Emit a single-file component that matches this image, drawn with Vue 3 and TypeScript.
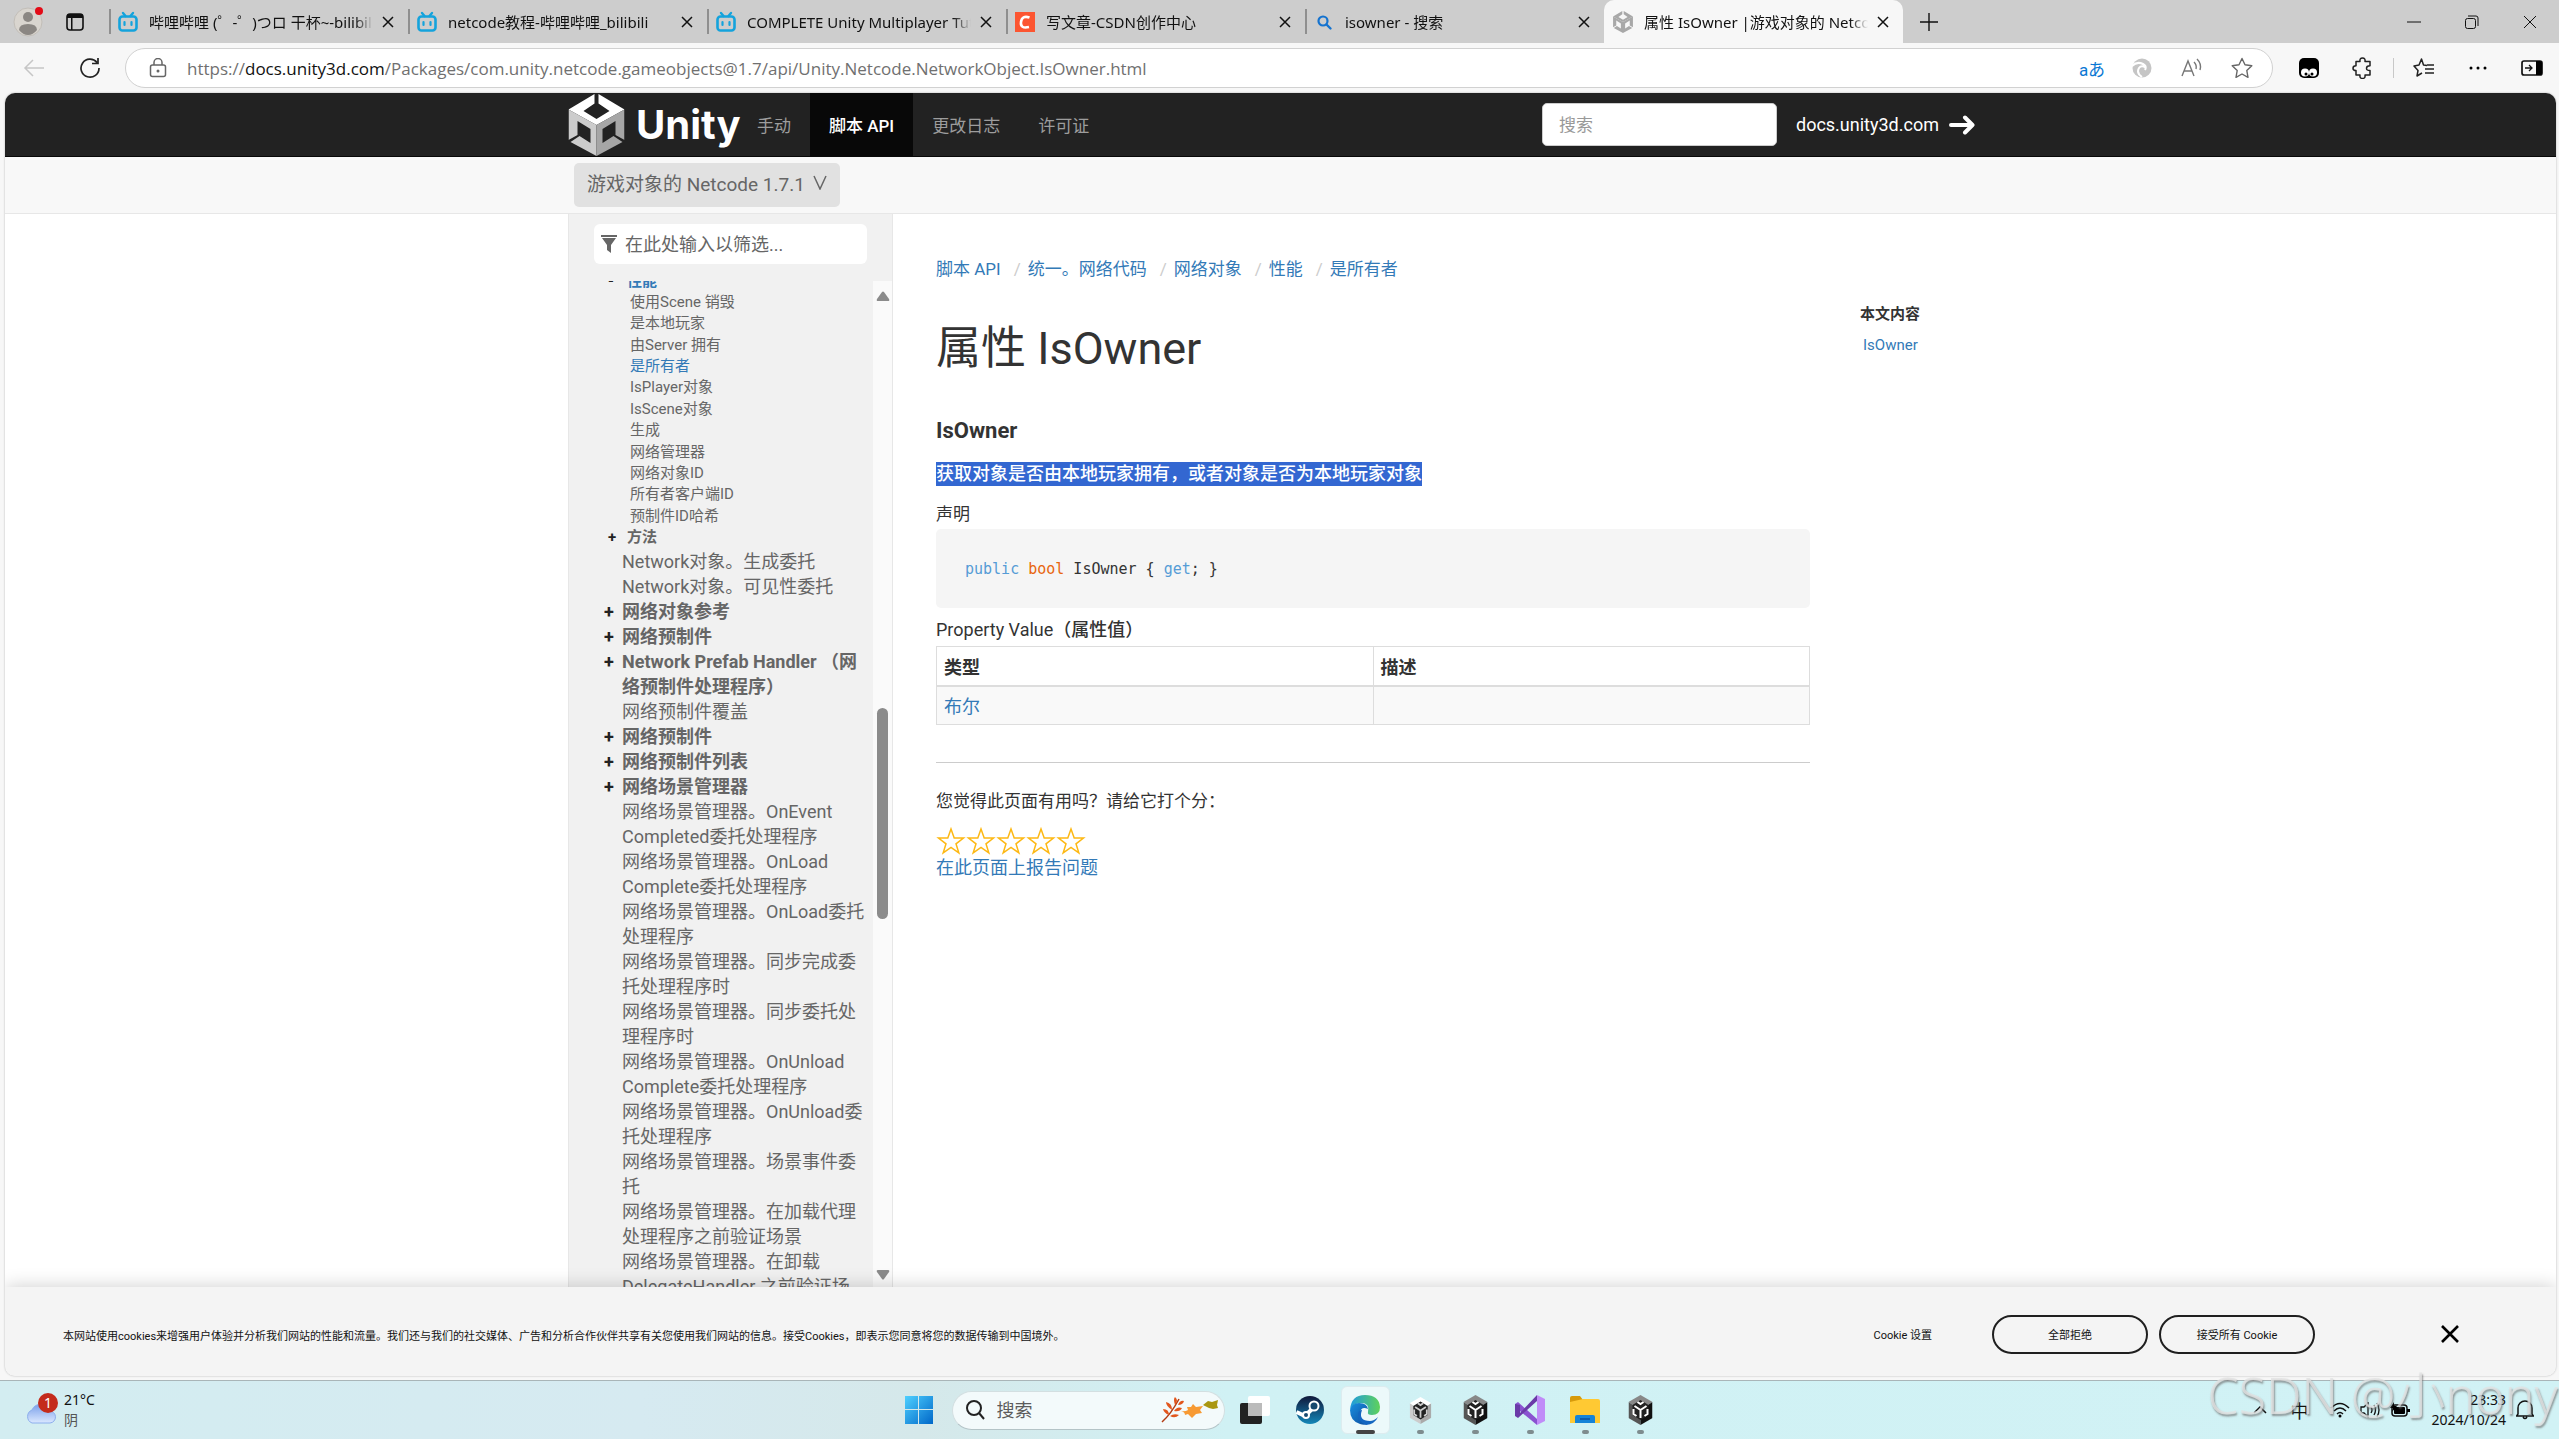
<script setup lang="ts">
interface Tab {
  title: string
  icon: 'bili' | 'csdn' | 'search' | 'unity'
  active?: boolean
}

interface TreeItem {
  text: string
  bold?: boolean
}

const tabs: Tab[] = [
  { title: '哔哩哔哩 (゜-゜)つロ 干杯~-bilibili', icon: 'bili' },
  { title: 'netcode教程-哔哩哔哩_bilibili', icon: 'bili' },
  { title: 'COMPLETE Unity Multiplayer Tutorial', icon: 'bili' },
  { title: '写文章-CSDN创作中心', icon: 'csdn' },
  { title: 'isowner - 搜索', icon: 'search' },
  { title: '属性 IsOwner |游戏对象的 Netcode', icon: 'unity', active: true },
]

const navItems = ['手动', '脚本 API', '更改日志', '许可证']
const crumbs = ['脚本 API', '统一。网络代码', '网络对象', '性能', '是所有者']

const properties = [
  '使用Scene 销毁',
  '是本地玩家',
  '由Server 拥有',
  '是所有者',
  'IsPlayer对象',
  'IsScene对象',
  '生成',
  '网络管理器',
  '网络对象ID',
  '所有者客户端ID',
  '预制件ID哈希',
]

const tree: TreeItem[] = [
  { text: 'Network对象。生成委托' },
  { text: 'Network对象。可见性委托' },
  { text: '网络对象参考', bold: true },
  { text: '网络预制件', bold: true },
  { text: 'Network Prefab Handler （网络预制件处理程序）', bold: true },
  { text: '网络预制件覆盖' },
  { text: '网络预制件', bold: true },
  { text: '网络预制件列表', bold: true },
  { text: '网络场景管理器', bold: true },
  { text: '网络场景管理器。OnEvent Completed委托处理程序' },
  { text: '网络场景管理器。OnLoad Complete委托处理程序' },
  { text: '网络场景管理器。OnLoad委托处理程序' },
  { text: '网络场景管理器。同步完成委托处理程序时' },
  { text: '网络场景管理器。同步委托处理程序时' },
  { text: '网络场景管理器。OnUnload Complete委托处理程序' },
  { text: '网络场景管理器。OnUnload委托处理程序' },
  { text: '网络场景管理器。场景事件委托' },
  { text: '网络场景管理器。在加载代理处理程序之前验证场景' },
  { text: '网络场景管理器。在卸载 DelegateHandler 之前验证场\n景' },
]
</script>

<template>
  <div class="screen">
    <svg class="defs" aria-hidden="true">
      <symbol id="cube" viewBox="0 0 56 62">
        <path fill="var(--top)" d="M26 0 0 15.500 28 31 56 15.500 30 0V9.500L41 17 28 25 15 17 26 9.500Z" />
        <path fill="var(--left)" d="M0 15.500 28 31V62L2 48 11 42 22 49V35L9 27V41L0 46Z" />
        <path fill="var(--right)" d="M56 15.500 28 31V62L54 48 45 42 34 49V35L47 27V41L56 46Z" />
      </symbol>
      <symbol id="hub" viewBox="0 0 24 30">
        <path fill="var(--a)" d="M12 0 24 7 12 15 0 7Z" />
        <path fill="var(--b)" d="M0 7 12 15V30L0 23Z" />
        <path fill="var(--c)" d="M24 7 12 15V30L24 23Z" />
        <path fill="var(--d)" d="M12 5 20 10V20L12 25 4 20V10Z" />
        <path fill="none" stroke="var(--e)" stroke-width="2" d="M12 15V23M12 15 6 11M12 15 18 11M9 7 12 9 15 7M5 14V19L8 21M19 14V19L16 21" />
      </symbol>
    </svg>

    <header class="tabbar">
      <div class="tab-tools">
        <button class="avatar" aria-label="个人资料">
          <svg width="32" height="30" viewBox="0 0 32 30">
            <circle cx="15" cy="15" r="14" fill="#d9d5cf" stroke="#c2beb8" />
            <circle cx="15" cy="10" r="5" fill="#8b8783" />
            <path d="M6 23q0-6 9-6t9 6q-4 5-9 5t-9-5" fill="#8b8783" />
            <circle cx="26" cy="4" r="4" fill="#e30b17" />
          </svg>
        </button>
        <button aria-label="标签操作">
          <svg width="20" height="20" viewBox="0 0 20 20">
            <rect x="2" y="2" width="16" height="16" rx="3" fill="none" stroke="#111" stroke-width="1.600" />
            <path d="M2 6V4q0-2 2-2h12q2 0 2 2v2ZM6 6h1.500v12H6Z" fill="#111" />
          </svg>
        </button>
      </div>
      <div v-for="tab in tabs" :key="tab.title" class="tab" :class="{ active: tab.active }">
        <svg v-if="tab.icon === 'bili'" class="favicon" viewBox="0 0 22 22">
          <path d="M6 2 8.500 5M16 2 13.500 5" stroke="#14a3dc" stroke-width="2.400" stroke-linecap="round" />
          <rect x="2.500" y="5.500" width="17" height="14" rx="3" fill="none" stroke="#14a3dc" stroke-width="2.600" />
          <path d="M7.500 11v3M14.500 11v3" stroke="#14a3dc" stroke-width="2.200" stroke-linecap="round" />
        </svg>
        <svg v-else-if="tab.icon === 'csdn'" class="favicon" viewBox="0 0 22 22">
          <rect x="1" y="1" width="20" height="20" fill="#fc5531" />
          <path d="M15.500 6.500Q8 4 7 11t8 5" fill="none" stroke="#fff" stroke-width="2.600" />
        </svg>
        <svg v-else-if="tab.icon === 'search'" class="favicon" viewBox="0 0 22 22">
          <circle cx="10" cy="10" r="4.500" fill="none" stroke="#1573cf" stroke-width="2.200" />
          <path d="m13.500 13.500 4 4" stroke="#1573cf" stroke-width="2.400" stroke-linecap="round" />
        </svg>
        <svg v-else class="favicon gray" viewBox="0 0 56 62"><use href="#cube" /></svg>
        <span class="tab-title">{{ tab.title }}</span>
        <button class="tab-close" aria-label="关闭标签页">
          <svg width="12" height="12" viewBox="0 0 12 12"><path d="m1 1 10 10M11 1 1 11" stroke="#111" stroke-width="1.500" /></svg>
        </button>
      </div>
      <button class="new-tab" aria-label="新建标签页">
        <svg width="18" height="18" viewBox="0 0 18 18"><path d="M9 0v18M0 9h18" stroke="#111" stroke-width="1.400" /></svg>
      </button>
      <div class="window-controls">
        <button aria-label="最小化"><svg width="14" height="14" viewBox="0 0 14 14"><path d="M0 7h14" stroke="#111" /></svg></button>
        <button aria-label="还原">
          <svg width="14" height="14" viewBox="0 0 14 14"><path d="M3 1h8q2 0 2 2v8" fill="none" stroke="#111" /><rect x=".5" y="3.500" width="10" height="10" rx="2" fill="none" stroke="#111" /></svg>
        </button>
        <button aria-label="关闭"><svg width="14" height="14" viewBox="0 0 14 14"><path d="m1 1 12 12M13 1 1 13" stroke="#111" /></svg></button>
      </div>
    </header>

    <div class="toolbar">
      <button class="tool" aria-label="返回">
        <svg width="22" height="20" viewBox="0 0 22 20"><path d="M21 10H2M10 2 2 10l8 8" fill="none" stroke="#c6c6c6" stroke-width="1.500" /></svg>
      </button>
      <button class="tool" aria-label="刷新">
        <svg width="22" height="22" viewBox="0 0 22 22"><path d="M18 5.500A9 9 0 1 0 20 11M19 1v5.500h-6" fill="none" stroke="#222" stroke-width="1.700" /></svg>
      </button>
      <div class="address">
        <svg width="18" height="20" viewBox="0 0 18 20"><rect x="1.500" y="7" width="15" height="11.500" rx="2" fill="none" stroke="#666" stroke-width="1.500" /><path d="M5 7V4.500a4 4 0 0 1 8 0V7" fill="none" stroke="#666" stroke-width="1.500" /><circle cx="9" cy="13" r="1.500" fill="#666" /></svg>
        <span class="url">https://<b>docs.unity3d.com</b>/Packages/com.unity.netcode.gameobjects@1.7/api/Unity.Netcode.NetworkObject.IsOwner.html</span>
        <button class="translate" aria-label="翻译">aあ</button>
        <button aria-label="购物">
          <svg width="20" height="20" viewBox="0 0 20 20"><circle cx="10" cy="10" r="9.500" fill="#c5c5c5" /><path d="M0 8q5-5 11-2 4 2 2 6M10 19q-6-4-3-9 2-3 6-1" fill="none" stroke="#fff" stroke-width="2" /></svg>
        </button>
        <button aria-label="大声朗读">
          <svg width="22" height="20" viewBox="0 0 22 20"><path d="M1 18 7 3l6 15M3 13h8M13 4q3 3 2 7M16 1q5 5 3 11" fill="none" stroke="#777" stroke-width="1.400" /></svg>
        </button>
        <button aria-label="收藏">
          <svg width="22" height="22" viewBox="0 0 22 22"><path d="m11 1.500 3 6.300 6.800.9-5 4.800 1.200 6.800-6-3.300-6 3.300 1.200-6.800-5-4.800 6.800-.9Z" fill="none" stroke="#666" stroke-width="1.400" stroke-linejoin="round" /></svg>
        </button>
      </div>
      <div class="extensions">
        <button aria-label="篡改猴">
          <svg width="20" height="20" viewBox="0 0 20 20"><rect width="20" height="20" rx="5" fill="#000" /><circle cx="6" cy="14.500" r="4" fill="#fff" /><circle cx="14" cy="14.500" r="4" fill="#fff" /><circle cx="7" cy="16" r="1.500" /><circle cx="13" cy="16" r="1.500" /></svg>
        </button>
        <button aria-label="扩展">
          <svg width="22" height="22" viewBox="0 0 22 22"><path d="M4 4.500h4q-.5-3.500 2.500-3.500T13 4.500h5v4.300q-3.500 0-3.500 2.400t3.500 2.400v4.400h-5q.5 3.500-2.500 3.500T8 18H4v-4.400q-3 0-3-2.400t3-2.400Z" fill="none" stroke="#222" stroke-width="1.500" stroke-linejoin="round" /></svg>
        </button>
        <span class="divider"></span>
        <button aria-label="收藏夹">
          <svg width="22" height="22" viewBox="0 0 22 22"><path d="M14 8.500 10.500 8 8.500 2l-2.500 6-5 1 4 4.500L4 19l5-3M14 8h7M12 12h9M12 16h9" fill="none" stroke="#222" stroke-width="1.500" stroke-linejoin="round" /></svg>
        </button>
        <button aria-label="更多">
          <svg width="20" height="6" viewBox="0 0 20 6"><circle cx="3" cy="3" r="1.500" /><circle cx="10" cy="3" r="1.500" /><circle cx="17" cy="3" r="1.500" /></svg>
        </button>
        <button aria-label="侧边栏">
          <svg width="22" height="18" viewBox="0 0 22 18"><rect x="1" y="2" width="20" height="14" rx="2" fill="none" stroke="#111" stroke-width="1.700" /><path d="M4 9h7M8 6l3 3-3 3" stroke="#111" stroke-width="1.300" fill="none" /><path d="M15 2h4q2 0 2 2v10q0 2-2 2h-4Z" /></svg>
        </button>
      </div>
    </div>

    <div class="page">
      <nav class="navbar">
        <div class="container nav-row">
          <a href="#" class="brand">
            <svg width="57" height="62" viewBox="0 0 56 62"><use href="#cube" /></svg>
            <span>Unity</span>
          </a>
          <a v-for="(item, i) in navItems" :key="item" href="#" class="nav-link" :class="{ current: i === 1 }">{{ item }}</a>
          <input class="site-search" type="text" placeholder="搜索" aria-label="搜索" />
          <a href="#" class="docs-link">
            docs.unity3d.com
            <svg width="27" height="20" viewBox="0 0 27 20"><path d="M2 10h20M16 2.500 23.500 10 16 17.500" fill="none" stroke="#fff" stroke-width="4" stroke-linecap="round" stroke-linejoin="round" /></svg>
          </a>
        </div>
      </nav>
      <div class="subnav">
        <div class="container">
          <button class="version">
            游戏对象的 Netcode 1.7.1
            <svg width="14" height="15" viewBox="0 0 14 15"><path d="M1 1 7 14 13 1" fill="none" stroke="#666" stroke-width="1.500" /></svg>
          </button>
        </div>
      </div>

      <div class="container body">
        <aside class="sidebar">
          <div class="filter">
            <svg width="16" height="18" viewBox="0 0 16 18"><path d="M0 0h16v2H0ZM1 3h14L10 10v8l-4-3v-5Z" fill="#666" /></svg>
            <input type="text" placeholder="在此处输入以筛选..." aria-label="筛选" />
          </div>
          <div class="tree-wrap">
            <div class="tree">
              <div class="group open"><span class="sign">-</span><a href="#">性能</a></div>
              <ul class="props">
                <li v-for="(p, i) in properties" :key="p"><a href="#" :class="{ selected: i === 3 }">{{ p }}</a></li>
              </ul>
              <div class="group"><span class="sign">+</span><a href="#">方法</a></div>
              <ul class="types">
                <li v-for="(item, i) in tree" :key="i" :class="{ bold: item.bold }">
                  <span class="sign">{{ item.bold ? '+' : '' }}</span><a href="#">{{ item.text }}</a>
                </li>
              </ul>
            </div>
            <div class="scrollbar">
              <svg width="14" height="10" viewBox="0 0 14 10"><path d="M6 1q1-1 2 0l5 7q1 2-1 2H2Q0 10 1 8Z" fill="#8b8b8b" /></svg>
              <div class="track"><div class="thumb"></div></div>
              <svg width="14" height="10" viewBox="0 0 14 10"><path d="M6 9q1 1 2 0l5-7q1-2-1-2H2Q0 0 1 2Z" fill="#8b8b8b" /></svg>
            </div>
          </div>
        </aside>

        <main class="article">
          <nav class="crumbs">
            <template v-for="(c, i) in crumbs" :key="c">
              <span v-if="i" class="slash">/</span><a href="#">{{ c }}</a>
            </template>
          </nav>
          <h1>属性 IsOwner</h1>
          <h4>IsOwner</h4>
          <p class="summary"><mark>获取对象是否由本地玩家拥有，或者对象是否为本地玩家对象</mark></p>
          <h5>声明</h5>
          <pre><code><span class="kw">public</span> <span class="ty">bool</span> IsOwner { <span class="kw">get</span>; }</code></pre>
          <h5 class="value-title">Property Value<b>（属性值）</b></h5>
          <table>
            <thead>
              <tr><th>类型</th><th>描述</th></tr>
            </thead>
            <tbody>
              <tr><td><a href="#">布尔</a></td><td></td></tr>
            </tbody>
          </table>
          <hr />
          <p class="question">您觉得此页面有用吗？请给它打个分：</p>
          <div class="stars">
            <button v-for="n in 5" :key="n" :aria-label="n + ' 星'">
              <svg width="30" height="28" viewBox="0 0 30 28"><path d="m15 2 3.200 9H27.500l-7.500 5.800 2.800 9L15 20.400 7.200 25.800l2.800-9L2.500 11h9.300Z" fill="none" stroke="#fdb813" stroke-width="1.500" /></svg>
            </button>
          </div>
          <a href="#" class="report">在此页面上报告问题</a>
        </main>

        <aside class="toc">
          <h6>本文内容</h6>
          <a href="#">IsOwner</a>
        </aside>
      </div>

      <section class="cookies">
        <p>本网站使用cookies来增强用户体验并分析我们网站的性能和流量。我们还与我们的社交媒体、广告和分析合作伙伴共享有关您使用我们网站的信息。接受Cookies，即表示您同意将您的数据传输到中国境外。</p>
        <button class="settings">Cookie 设置</button>
        <button class="pill">全部拒绝</button>
        <button class="pill">接受所有 Cookie</button>
        <button class="dismiss" aria-label="关闭">
          <svg width="18" height="18" viewBox="0 0 18 18"><path d="m1 1 16 16M17 1 1 17" stroke="#000" stroke-width="2.600" /></svg>
        </button>
      </section>
    </div>

    <footer class="taskbar">
      <div class="weather">
        <svg width="36" height="36" viewBox="0 0 36 36">
          <defs><linearGradient id="cloud" x1="0" y1="0" x2="0" y2="1"><stop offset="0" stop-color="#7ba0ea" /><stop offset="1" stop-color="#dbe8ff" /></linearGradient></defs>
          <path d="M8 31a7 7 0 0 1 0-13A9 9 0 0 1 25 19a6 6 0 0 1 1 12Z" fill="url(#cloud)" stroke="#8caeed" />
          <circle cx="24" cy="11" r="10" fill="#c42b1c" />
          <text x="24" y="16" fill="#fff" font-size="14" text-anchor="middle">1</text>
        </svg>
        <div><div>21°C</div><div class="sky">阴</div></div>
      </div>
      <div class="apps">
        <button class="app" aria-label="开始">
          <svg width="30" height="30" viewBox="0 0 30 30">
            <defs><linearGradient id="win" x1="0" y1="0" x2="1" y2="1"><stop offset="0" stop-color="#4fd0ff" /><stop offset="1" stop-color="#0067c8" /></linearGradient></defs>
            <path d="M1 1h13v13H1ZM15 1h14v13H15ZM1 15h13v14H1ZM15 15h14v14H15Z" fill="url(#win)" />
          </svg>
        </button>
        <label class="task-search">
          <svg width="20" height="20" viewBox="0 0 20 20"><circle cx="9" cy="8" r="7" fill="none" stroke="#222" stroke-width="2" /><path d="m14 13 5 6" stroke="#222" stroke-width="2" /></svg>
          <input type="text" placeholder="搜索" aria-label="搜索" />
          <svg width="58" height="28" viewBox="0 0 58 28">
            <path d="M1 26Q10 18 18 3" fill="none" stroke="#b33b12" stroke-width="1.500" />
            <path d="M14 9q-2-6 0-8 4 3 0 8M17 9q2-5 6-4-1 4-6 4M11 14q-6-4-6-8 6 1 6 8M13 15q3-5 8-3-2 4-8 3M8 19q-5-2-6-6 6 0 6 6M9 20q4-3 9-1-4 4-9 1" fill="#e2561d" />
            <path d="M20 15q4 1 7-1l-1-3 4 0 2-3 3 3 7-1-3 4 2 3-6 1-4 4-4-4-3 1q0-3-4-4" fill="#f79a33" />
            <path d="m42 9 5-4 4 1 6-2-1 5 1 3-5 1-4-1Z" fill="#a99711" />
          </svg>
        </label>
        <button class="app" aria-label="任务视图">
          <svg width="30" height="30" viewBox="0 0 30 30"><rect y="8" width="22" height="21" rx="2" fill="#222" /><rect x="8" y="1" width="22" height="20" rx="2" fill="#fff" /><path d="M8 8h14v13H8Z" fill="#bbb" /></svg>
        </button>
        <button class="app" aria-label="Steam">
          <svg width="30" height="30" viewBox="0 0 30 30">
            <defs><linearGradient id="steam" x1="0" y1="0" x2="0" y2="1"><stop offset="0" stop-color="#11183a" /><stop offset="1" stop-color="#1387b8" /></linearGradient></defs>
            <circle cx="15" cy="15" r="14" fill="url(#steam)" /><path d="m1.500 17 8.500 4 8-8" fill="none" stroke="#fff" stroke-width="4" /><circle cx="19" cy="11" r="4.500" fill="#17496f" stroke="#fff" stroke-width="2" /><circle cx="11" cy="20" r="3" fill="#17496f" stroke="#fff" stroke-width="2" />
          </svg>
        </button>
        <button class="app focused" aria-label="Edge">
          <svg width="30" height="30" viewBox="0 0 30 30">
            <defs>
              <linearGradient id="edge" x1="0" y1="0" x2="1" y2="0"><stop offset="0" stop-color="#1f9be0" /><stop offset="1" stop-color="#5fd25a" /></linearGradient>
              <linearGradient id="deep" x1="0" y1="0" x2="1" y2="1"><stop offset="0" stop-color="#1a8fe0" /><stop offset="1" stop-color="#0c4a9b" /></linearGradient>
            </defs>
            <path d="M0 15Q1 0 15 0t15 12q0 8-8 8-5 0-4-3 2-9-7-9Q3 8 0 15" fill="url(#edge)" />
            <path d="M0 15q2-7 9-7 8 0 9 6-7-3-8 4 0 9 10 10-5 3-10 1Q0 26 0 15" fill="url(#deep)" />
            <path d="M12 15q-4 11 8 11 4 0 8-4-3 7-12 8-9-4-8-11 1-4 4-4" fill="#1466c0" />
          </svg>
        </button>
        <button class="app running light" aria-label="Unity Hub"><svg width="25" height="27" viewBox="0 0 24 30"><use href="#hub" /></svg></button>
        <button class="app running dark" aria-label="Unity"><svg width="27" height="30" viewBox="0 0 24 30"><use href="#hub" /></svg></button>
        <button class="app running" aria-label="Visual Studio">
          <svg width="30" height="30" viewBox="0 0 30 30"><path d="M0 9 3 7 22 24V30L0 12Z" fill="#8a52d0" /><path d="M0 9v12l3 2 19-17V0L5 18V10Z" fill="#6a3aa8" /><path d="m22 0 8 4v22l-8 4Z" fill="#c08cf8" /></svg>
        </button>
        <button class="app running" aria-label="文件资源管理器">
          <svg width="30" height="28" viewBox="0 0 30 28"><path d="M0 2q0-2 2-2h8l3 4v4H0Z" fill="#d79a0b" /><path d="M0 6 13 3h15q2 0 2 2v22H0Z" fill="#ffc933" /><path d="M5 27v-6q0-2 2-2h16q2 0 2 2v6Z" fill="#1583d8" /><path d="M10 23h10" stroke="#0a4f9e" stroke-width="1.500" /></svg>
        </button>
        <button class="app running dark" aria-label="Unity 编辑器"><svg width="27" height="30" viewBox="0 0 24 30"><use href="#hub" /></svg></button>
      </div>
      <div class="tray">
        <svg width="14" height="8" viewBox="0 0 14 8"><path d="m1 7 6-6 6 6" fill="none" stroke="#111" stroke-width="1.500" /></svg>
        <span class="ime">中</span>
        <svg width="20" height="16" viewBox="0 0 20 16"><path d="M1 6q9-9 18 0M4 9q6-6 12 0M7 12q3-3 6 0" fill="none" stroke="#111" stroke-width="1.500" /><circle cx="10" cy="14" r="1.500" /></svg>
        <svg width="20" height="16" viewBox="0 0 20 16"><path d="M1 5h3l4-4v14l-4-4H1ZM11 5q2 3 0 6M14 3q3 5 0 10M17 1q4 7 0 14" fill="none" stroke="#111" stroke-width="1.300" /></svg>
        <svg width="20" height="16" viewBox="0 0 20 16"><rect x="2" y="3" width="15" height="11" rx="3" fill="none" stroke="#111" stroke-width="1.500" /><rect x="4" y="5" width="11" height="7" rx="1" /><path d="M17 7h3v3h-3ZM4 0 0 6h3L2 10 7 4H4Z" /></svg>
        <div class="clock"><div>23:33</div><div>2024/10/24</div></div>
        <svg width="18" height="20" viewBox="0 0 18 20"><path d="M2 14V8a7 7 0 0 1 14 0v6l1.500 2H.5ZM7 17q2 3 4 0" fill="none" stroke="#111" stroke-width="1.500" /></svg>
      </div>
    </footer>
    <div class="watermark">CSDN @小nony</div>
  </div>
</template>

<style>
body {
  margin: 0;
}
</style>

<style scoped>
* {
  box-sizing: border-box;
}
.screen {
  position: relative;
  display: flex;
  flex-direction: column;
  height: 100vh;
  overflow: hidden;
  background: #f7f7f7;
  color: #333;
  font-family: Roboto, "Noto Sans CJK SC", sans-serif;
  font-size: 18px;
}
.defs {
  position: absolute;
  width: 0;
  height: 0;
}
button {
  display: flex;
  align-items: center;
  justify-content: center;
  padding: 0;
  border: 0;
  background: none;
  color: inherit;
  font: inherit;
}
input {
  min-width: 0;
  padding: 0;
  border: 0;
  outline: 0;
  background: none;
  font: inherit;
}
a {
  color: #337ab7;
  text-decoration: none;
}
ul {
  margin: 0;
  padding: 0;
  list-style: none;
}
svg {
  flex: none;
}

/* Browser tabs */
.tabbar {
  display: flex;
  flex: none;
  align-items: center;
  height: 43px;
  background: #cdcdcd;
  color: #111;
  font-family: "Noto Sans", "Noto Sans CJK SC", sans-serif;
  font-size: 15px;
}
.tab-tools {
  display: flex;
  flex: none;
  align-items: center;
  gap: 20px;
  width: 109px;
  padding-left: 13px;
}
.tab {
  display: flex;
  flex: 0 1 299px;
  align-items: center;
  min-width: 0;
  height: 25px;
  padding: 0 13px 0 6px;
  border-left: 2px solid #8f8f8f;
}
.tab.active {
  height: 43px;
  border-left-color: transparent;
  border-radius: 10px 10px 0 0;
  background: #f7f7f7;
}
.favicon {
  width: 22px;
  height: 22px;
}
.tab-title {
  flex: 1;
  margin-left: 10px;
  overflow: hidden;
  line-height: 22px;
  white-space: nowrap;
  mask-image: linear-gradient(to right, #000 92%, transparent);
}
.tab-close {
  width: 14px;
  margin-left: 8px;
}
.new-tab {
  width: 52px;
}
.window-controls {
  display: flex;
  margin-left: auto;
}
.window-controls button {
  width: 58px;
  height: 43px;
}

/* Toolbar */
.toolbar {
  display: flex;
  flex: none;
  align-items: center;
  height: 50px;
  padding-left: 6px;
}
.tool {
  width: 56px;
}
.address {
  display: flex;
  flex: 1;
  align-items: center;
  height: 40px;
  margin-left: 7px;
  padding: 0 5px 0 23px;
  border: 1px solid #d1d1d1;
  border-radius: 20px;
  background: #fff;
}
.url {
  flex: 1;
  margin-left: 20px;
  color: #707070;
  font-family: "Open Sans", sans-serif;
  font-size: 17px;
}
.url b {
  color: #111;
  font-weight: 400;
}
.address button {
  width: 50px;
}
.address .translate {
  color: #0a78d4;
  font-size: 17px;
}
.extensions {
  display: flex;
  align-items: center;
  padding-left: 9px;
}
.extensions button {
  width: 54px;
}
.divider {
  width: 1px;
  height: 20px;
  margin: 0 3px;
  background: #c8c8c8;
}

/* Web page frame */
.page {
  display: flex;
  flex: 1;
  flex-direction: column;
  min-height: 0;
  margin: 0 3px 4px 5px;
  overflow: hidden;
  border-radius: 10px;
  background: #fff;
  box-shadow: 0 0 2px #aaa;
}
.container {
  width: 100%;
  max-width: 1425px;
  margin: 0 auto;
}
.navbar {
  flex: none;
  border-bottom: 1px solid #080808;
  background: #222;
}
.nav-row {
  display: flex;
  align-items: center;
  height: 63px;
}
.brand {
  --top: #fff;
  --left: #ccc;
  --right: #a6a6a6;
  display: flex;
  align-items: center;
  gap: 11px;
  width: 170px;
  color: #fff;
  font-family: Inter, sans-serif;
  font-size: 40px;
  font-weight: 700;
}
.nav-link {
  display: flex;
  align-items: center;
  height: 63px;
  padding: 0 19px;
  color: #9d9d9d;
  font-size: 17px;
}
.nav-link.current {
  background: #080808;
  color: #fff;
  font-weight: 500;
}
.site-search {
  width: 235px;
  height: 43px;
  margin-left: auto;
  padding: 0 16px;
  border: 1px solid #ccc;
  border-radius: 5px;
  background: #fff;
  font-size: 17px;
}
.site-search::placeholder {
  color: #999;
}
.docs-link {
  display: flex;
  align-items: center;
  gap: 10px;
  margin: 0 17px 0 19px;
  color: #fff;
}
.subnav {
  flex: none;
  height: 57px;
  padding-top: 6px;
  border-bottom: 1px solid #e7e7e7;
  background: #f8f8f8;
}
.version {
  gap: 8px;
  height: 44px;
  margin-left: 6px;
  padding: 0 13px 6px;
  border-radius: 5px;
  background: #e1e1e1;
  color: #666;
  font-size: 19px;
}
.body {
  display: flex;
  flex: 1;
  min-height: 0;
}

/* Sidebar */
.sidebar {
  display: flex;
  flex: none;
  flex-direction: column;
  width: 325px;
  border: 1px solid #e7e7e7;
  border-width: 0 1px;
  background: #f1f1f1;
}
.filter {
  display: flex;
  flex: none;
  align-items: center;
  gap: 8px;
  height: 40px;
  margin: 10px 25px 17px;
  padding: 0 7px;
  border-radius: 6px;
  background: #fff;
}
.filter input {
  flex: 1;
}
.filter input::placeholder {
  color: #666;
}
.tree-wrap {
  display: flex;
  flex: 1;
  min-height: 0;
}
.tree {
  flex: 1;
  margin-left: 35px;
  overflow: hidden;
}
.sidebar a {
  color: #666;
}
.group {
  display: flex;
  gap: 12px;
  height: 21px;
  padding-left: 4px;
  font-size: 15px;
  font-weight: 700;
  line-height: 21px;
}
.group .sign {
  width: 7px;
}
.group.open {
  margin-top: -10px;
}
.sidebar .group.open a,
.sidebar .selected {
  color: #337ab7;
}
.props {
  display: grid;
  grid-template-rows: repeat(11, 1fr);
  height: 235px;
  padding-left: 26px;
  font-size: 15px;
  line-height: 21px;
}
.types {
  margin-top: 1px;
  line-height: 25px;
}
.types li {
  display: flex;
}
.types .sign {
  flex: none;
  width: 18px;
}
.types a {
  width: 248px;
  white-space: pre-line;
}
.bold {
  font-weight: 700;
}
.sign {
  color: #222;
}
.scrollbar {
  display: flex;
  flex: none;
  flex-direction: column;
  align-items: center;
  width: 19px;
  padding: 10px 0 7px;
  background: #fafafa;
}
.track {
  display: flex;
  flex: 1;
  flex-direction: column;
  padding-top: 407px;
}
.thumb {
  width: 11px;
  height: 211px;
  border-radius: 6px;
  background: #8b8b8b;
}

/* Article */
.article {
  flex: none;
  width: 874px;
  margin-left: 43px;
  padding-top: 42px;
}
.crumbs {
  display: flex;
  height: 26px;
  font-size: 17px;
  line-height: 26px;
}
.slash {
  margin: 0 7px 0 13px;
  color: #ccc;
}
h1 {
  margin: 42px 0 0;
  font-size: 45px;
  font-weight: 400;
  line-height: 50px;
}
h4 {
  margin: 42px 0 0;
  font-size: 22px;
  font-weight: 700;
  line-height: 30px;
}
.summary {
  margin: 16px 0 15px;
  line-height: 24px;
}
mark {
  display: inline-block;
  background: #3367d1;
  color: #fff;
  font-weight: 500;
}
h5 {
  margin: 0;
  font-size: 17px;
  font-weight: 400;
  line-height: 26px;
}
pre {
  margin: 2px 0 9px;
  padding: 30px 29px 28px;
  border-radius: 5px;
  background: #f5f5f5;
  font-family: "DejaVu Sans Mono", monospace;
  font-size: 15px;
  line-height: 21px;
}
code {
  font: inherit;
}
.kw {
  color: #569cd6;
}
.ty {
  color: #e8650d;
}
.value-title {
  font-size: 18px;
}
.value-title b {
  font-weight: 500;
}
table {
  width: 100%;
  margin-top: 3px;
  border-collapse: collapse;
  table-layout: fixed;
}
th,
td {
  height: 39px;
  padding: 0 7px;
  border: 1px solid #ddd;
  text-align: left;
}
th {
  border-bottom-width: 2px;
}
td {
  background: #f9f9f9;
}
hr {
  margin: 37px 0 25px;
  border: 0;
  border-top: 1px solid #ccc;
}
.question {
  margin: 0;
  font-size: 17px;
  line-height: 26px;
}
.stars {
  display: flex;
  margin-top: 13px;
}
.report {
  font-size: 18px;
  line-height: 26px;
}
.toc {
  margin-left: 50px;
  padding-top: 90px;
  font-size: 15px;
  line-height: 21px;
}
.toc h6 {
  margin: 0 0 10px;
  font-size: 15px;
}
.toc a {
  margin-left: 3px;
}

/* Cookie banner */
.cookies {
  position: relative;
  display: flex;
  flex: none;
  align-items: center;
  height: 89px;
  padding: 5px 97px 0 58px;
  background: #f4f4f4;
  box-shadow: 0 0 18px rgb(0 0 0 / 20%);
  color: #111;
  font-size: 11px;
}
.cookies p {
  flex: 1;
  margin: 2px 0 0;
}
.settings {
  margin-right: 60px;
}
.pill {
  width: 156px;
  height: 39px;
  margin-right: 11px;
  border: 2px solid #1f1f1f;
  border-radius: 20px;
}
.dismiss {
  margin-left: 115px;
}

/* Taskbar */
.taskbar {
  display: grid;
  flex: none;
  grid-template-columns: 1fr auto 1fr;
  align-items: center;
  height: 59px;
  border-top: 1px solid #a9b5b8;
  background: linear-gradient(90deg, #d3edf1, #d6eaf1 25%, #d5e8ea 36%, #d0f1f4 48%, #d1f2f5);
  color: #111;
  font-family: "Noto Sans", "Noto Sans CJK SC", sans-serif;
  font-size: 14px;
}
.weather {
  display: flex;
  align-items: center;
  gap: 4px;
  padding-left: 24px;
  line-height: 20px;
}
.sky {
  color: #555;
}
.apps {
  display: flex;
  align-items: center;
}
.app {
  position: relative;
  width: 55px;
  height: 58px;
}
.focused::before {
  position: absolute;
  inset: 5px 3px;
  border: 1px solid #dcecef;
  border-radius: 6px;
  background: #ecf9fa;
  content: "";
}
.focused svg {
  position: relative;
}
.running::after,
.focused::after {
  position: absolute;
  bottom: 5px;
  left: 24px;
  width: 7px;
  height: 4px;
  border-radius: 2px;
  background: #7e8c8e;
  content: "";
}
.focused::after {
  left: 18px;
  width: 19px;
  background: #444;
}
.task-search {
  display: flex;
  align-items: center;
  gap: 12px;
  width: 273px;
  height: 39px;
  margin: 0 3px 0 5px;
  padding: 0 5px 0 12px;
  border: 1px solid #d3dfe1;
  border-bottom-color: #b4c4c7;
  border-radius: 20px;
  background: #f3fafb;
  font-size: 18px;
}
.task-search input {
  flex: 1;
}
.task-search input::placeholder {
  color: #5c5c5c;
}
.gray {
  --top: #a8a8a8;
  --left: #a8a8a8;
  --right: #a8a8a8;
}
.light {
  --a: #fff;
  --b: #ccc;
  --c: #aaa;
  --d: #222;
  --e: #ccc;
}
.dark {
  --a: #888;
  --b: #555;
  --c: #111;
  --d: #222;
  --e: #fff;
}
.tray {
  display: flex;
  align-items: center;
  justify-content: flex-end;
  gap: 10px;
  padding-right: 25px;
}
.ime {
  margin: 0 11px 0 14px;
  font-size: 18px;
}
.clock {
  margin-left: 12px;
  line-height: 20px;
  text-align: right;
}
.watermark {
  position: absolute;
  right: 1px;
  bottom: 11px;
  color: rgb(226 226 226 / 80%);
  font-family: "Noto Sans", "Noto Sans CJK SC", sans-serif;
  font-size: 50px;
  font-weight: 300;
  line-height: 66px;
  text-shadow: 1px 2px 2px rgb(110 110 110 / 70%);
  pointer-events: none;
}
</style>
